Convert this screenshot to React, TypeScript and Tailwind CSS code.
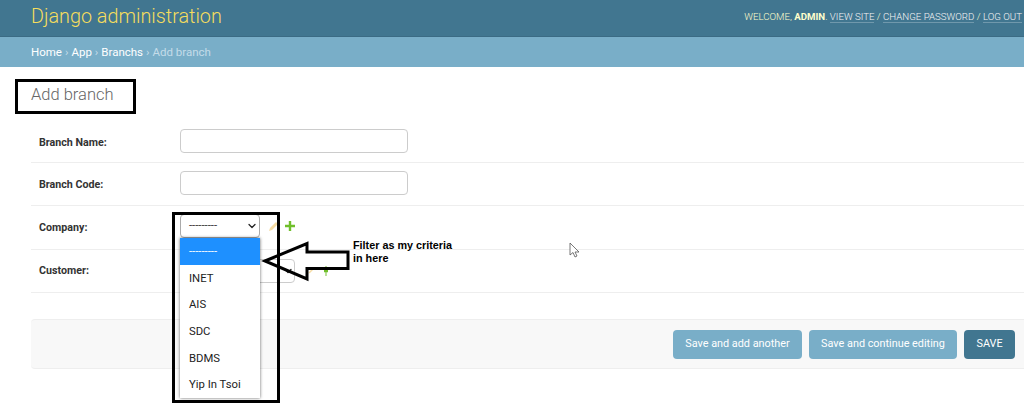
import { ChevronDown } from 'lucide-react'

const options = ['INET', 'AIS', 'SDC', 'BDMS', 'Yip In Tsoi']

function FormRow({ label, children, className }: { label: string; children: React.ReactNode; className: string }) {
  return (
    <div className={`flex items-start border-b border-[#eeeeee] pl-[8px] ${className}`}>
      <label className="mt-[7px] w-[141px] text-[10.7px] font-bold leading-[14px] text-[#333333]">{label}</label>
      {children}
    </div>
  )
}

function Pencil({ className }: { className: string }) {
  return (
    <svg width="12" height="12" viewBox="0 0 12 12" className={className}>
      <path d="M1 11l1-3 6-6 2 2-6 6z" fill="#f6dca3" />
    </svg>
  )
}

function Plus({ className }: { className: string }) {
  return (
    <svg width="10" height="10" viewBox="0 0 10 10" className={className}>
      <path d="M3.800 0h2.400v3.800H10v2.400H6.200V10H3.800V6.200H0V3.800h3.800z" fill="#70bf2b" />
    </svg>
  )
}

export default function App() {
  return (
    <div className="relative h-[405px] w-[1024px] overflow-hidden bg-white font-['Roboto',sans-serif]">
      {/* Header */}
      <header className="flex h-[37px] items-center justify-between border-b border-[#3b6b84] bg-[#417690] pl-[31px] pr-[2px]">
        <div className="mb-[2px] text-[19.8px] font-light leading-[24px] text-[#f5dd5d]">Django administration</div>
        <div className="mb-[2px] whitespace-nowrap text-[9.700px] font-light text-[#ffffcc]">
          WELCOME, <strong className="font-bold">ADMIN</strong>.{' '}
          <span className="border-b border-white/25 text-[#f5f5f5]">VIEW SITE</span> /{' '}
          <span className="border-b border-white/25 text-[#f5f5f5]">CHANGE PASSWORD</span> /{' '}
          <span className="border-b border-white/25 text-[#f5f5f5]">LOG OUT</span>
        </div>
      </header>

      {/* Breadcrumbs */}
      <div className="flex h-[30px] items-center bg-[#79aec8] pl-[31px] pt-[1px] text-[11.5px] text-[#c4dce8]">
        <span className="text-white">Home</span>
        <span className="px-[3px]">›</span>
        <span className="text-white">App</span>
        <span className="px-[3px]">›</span>
        <span className="text-white">Branchs</span>
        <span className="px-[3px]">›</span>
        <span>Add branch</span>
      </div>

      {/* Content */}
      <main className="pl-[31px]">
        <h1 className="h-[54px] pt-[18px] text-[16.5px] font-light leading-[20px] text-[#666666]">Add branch</h1>
        <div className="flex flex-col">
          <FormRow label="Branch Name:" className="h-[42px] pt-[8px]">
            <div className="h-[24px] w-[228px] rounded-[4px] border border-[#cccccc] bg-white" />
          </FormRow>
          <FormRow label="Branch Code:" className="h-[43px] pt-[8px]">
            <div className="h-[24px] w-[228px] rounded-[4px] border border-[#cccccc] bg-white" />
          </FormRow>
          <FormRow label="Company:" className="h-[44px] pt-[8px]">
            <div className="flex items-center">
              <div className="flex h-[24px] w-[80px] items-center justify-between rounded-[4px] border border-[#aaaaaa] bg-white pl-[8px] pr-[1px] text-[11.3px] text-[#333333]">
                <span>---------</span>
                <ChevronDown size={12} strokeWidth={2.5} className="text-[#222222]" />
              </div>
              <Pencil className="ml-[8px]" />
              <Plus className="ml-[5px]" />
            </div>
          </FormRow>
          <FormRow label="Customer:" className="h-[43px] pt-[7px]">
            <div className="mt-[2px] flex items-center">
              <div className="flex h-[24px] w-[115px] items-center justify-end rounded-[4px] border border-[#cccccc] bg-white">
                <ChevronDown size={12} strokeWidth={2.5} className="text-[#222222]" />
              </div>
              <Pencil className="ml-[10px] scale-[0.5]" />
              <Plus className="ml-[4px] scale-x-[0.4]" />
            </div>
          </FormRow>
        </div>

        {/* Submit row */}
        <div className="mt-[26px] flex h-[50px] items-center justify-end gap-[7px] rounded-l-[4px] border-y border-[#eeeeee] bg-[#f8f8f8] pr-[9px]">
          <button className="h-[29px] w-[129px] rounded-[4px] bg-[#79aec8] text-[10.85px] text-white">Save and add another</button>
          <button className="h-[29px] w-[148px] rounded-[4px] bg-[#79aec8] text-[10.85px] text-white">Save and continue editing</button>
          <button className="h-[29px] w-[51px] rounded-[4px] bg-[#417690] text-[10.85px] text-white">SAVE</button>
        </div>
      </main>

      {/* Annotation: box round the title */}
      <div className="absolute left-[15px] top-[79px] h-[35px] w-[121px] border-[3px] border-black" />

      {/* Open select menu */}
      <div className="absolute left-[180px] top-[238px] w-[80px] bg-white text-[11.3px] text-[#222222] shadow-[0_0_3px_rgba(0,0,0,0.6)]">
        <div className="flex h-[27px] items-center bg-[#1e90ff] pl-[9px] pt-[2px] text-white">---------</div>
        {options.map((option) => (
          <div key={option} className="flex h-[26.600px] items-center whitespace-nowrap pl-[9px] pt-[2px]">
            {option}
          </div>
        ))}
      </div>

      {/* Annotation: box round the select */}
      <div className="absolute left-[172px] top-[212px] h-[191px] w-[108px] border-[3px] border-black" />

      {/* Annotation: arrow, unfilled so the row shows through */}
      <svg width="92" height="42" viewBox="0 0 92 42" className="absolute left-[260px] top-[240px]">
        <path d="M5 21L47 3.500V12H88V28.500H47V39Z" fill="none" stroke="black" strokeWidth="3" />
      </svg>

      {/* Annotation: note */}
      <div className="absolute left-[353px] top-[239px] w-[105px] font-['Liberation_Sans',sans-serif] text-[10.8px] font-bold leading-[13px] text-black">
        Filter as my criteria in here
      </div>

      {/* Mouse cursor */}
      <svg width="12" height="17" viewBox="0 0 12 17" className="absolute left-[569px] top-[242px]">
        <path d="M1 1V13L4 10.500L6 15L8 14L6 10H10Z" fill="white" stroke="#555555" strokeWidth="0.8" />
      </svg>
    </div>
  )
}
